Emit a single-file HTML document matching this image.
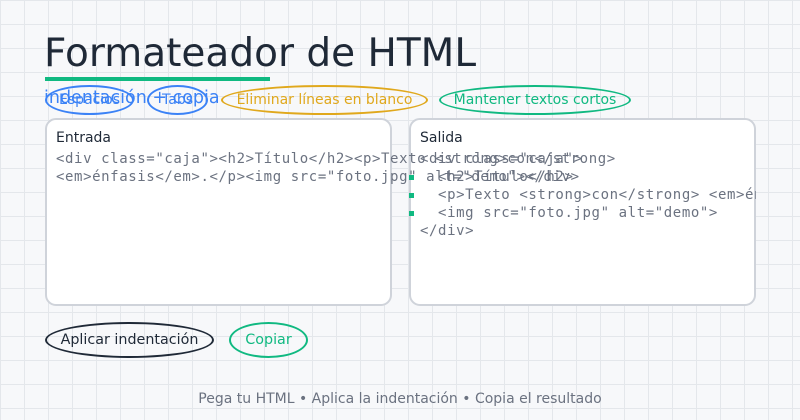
<!DOCTYPE html>
<html><head><meta charset="utf-8"><style>
*{margin:0;padding:0;box-sizing:border-box}
body{width:800px;height:420px;overflow:hidden;position:relative;font-family:"DejaVu Sans","Liberation Sans",sans-serif;
background-color:#f7f8fa;
background-image:linear-gradient(#e4e7eb 1px,transparent 1px),linear-gradient(90deg,#e4e7eb 1px,transparent 1px);
background-size:24px 24px;background-position:0 0}
.a{position:absolute;white-space:nowrap}
h1{position:absolute;left:44px;top:31px;font-size:39px;font-weight:normal;color:#1f2937;line-height:46px;white-space:nowrap}
.ul{position:absolute;left:45px;top:77px;width:225px;height:4px;background:#10b981}
.sub{left:44px;top:88px;font-size:17.5px;color:#3b82f6}
.chip{position:absolute;border:2px solid;border-radius:50%;font-size:14px;display:flex;align-items:center;justify-content:center;height:30px;top:85px;white-space:nowrap}
.panel{position:absolute;top:118px;width:347px;height:188px;background:#fff;border:2px solid #cfd3da;border-radius:11px}
.lbl{font-size:14px;color:#1f2937;top:130px}
.code{font-family:"DejaVu Sans Mono","Liberation Mono",monospace;font-size:14px;letter-spacing:0.6px;color:#6b7280;line-height:18px}
.sq{position:absolute;left:409px;width:5px;height:5px;background:#10b981}
.btn{position:absolute;top:322px;height:36px;border:2px solid;border-radius:50%;font-size:14.3px;display:flex;align-items:center;justify-content:center;white-space:nowrap}
.clip{position:absolute;left:409px;top:118px;width:347px;height:188px;overflow:hidden}
</style></head><body>
<h1>Formateador de HTML</h1>
<div class="ul"></div>
<div class="chip" style="left:45px;width:89px;color:#3b82f6;border-color:#3b82f6">Espacios</div>
<div class="chip" style="left:147px;width:61px;color:#3b82f6;border-color:#3b82f6">Tabs</div>
<div class="chip" style="left:221px;width:207px;color:#e0a81c;border-color:#e0a81c">Eliminar líneas en blanco</div>
<div class="chip" style="left:439px;width:192px;color:#10b981;border-color:#10b981">Mantener textos cortos</div>
<div class="a sub">indentación + copia</div>
<div class="panel" style="left:45px"></div>
<div class="panel" style="left:409px"></div>
<div class="a lbl" style="left:56px">Entrada</div>
<div class="a lbl" style="left:420px">Salida</div>
<div class="a code" style="left:56px;top:150px">&lt;div class="caja"&gt;&lt;h2&gt;Título&lt;/h2&gt;&lt;p&gt;Texto &lt;strong&gt;con&lt;/strong&gt;<br>&lt;em&gt;énfasis&lt;/em&gt;.&lt;/p&gt;&lt;img src="foto.jpg" alt="demo"&gt;&lt;/div&gt;</div>
<div class="clip"><div class="a code" style="left:11px;top:32px">&lt;div class="caja"&gt;<br>&nbsp;&nbsp;&lt;h2&gt;Título&lt;/h2&gt;<br>&nbsp;&nbsp;&lt;p&gt;Texto &lt;strong&gt;con&lt;/strong&gt; &lt;em&gt;énfasis&lt;/em&gt;.&lt;/p&gt;<br>&nbsp;&nbsp;&lt;img src="foto.jpg" alt="demo"&gt;<br>&lt;/div&gt;</div></div>
<div class="sq" style="top:175px"></div>
<div class="sq" style="top:193px"></div>
<div class="sq" style="top:211px"></div>
<div class="btn" style="left:45px;width:169px;color:#1f2937;border-color:#1f2937">Aplicar indentación</div>
<div class="btn" style="left:229px;width:79px;color:#10b981;border-color:#10b981">Copiar</div>
<div class="a" style="left:0;width:800px;text-align:center;top:391px;font-size:14px;color:#6b7280">Pega tu HTML • Aplica la indentación • Copia el resultado</div>
</body></html>
